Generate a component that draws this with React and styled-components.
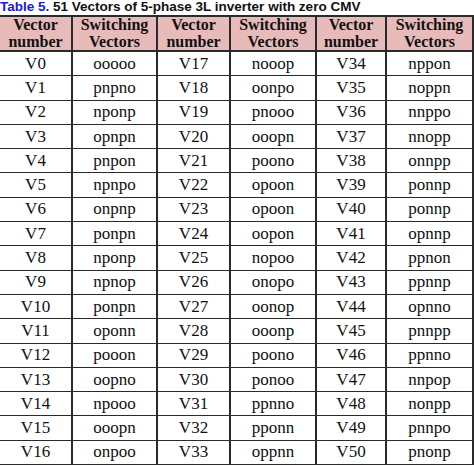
import styled, { createGlobalStyle } from 'styled-components';

const GlobalStyle = createGlobalStyle`
  html, body {
    margin: 0;
    padding: 0;
    background: #ffffff;
    overflow: hidden;
  }
`;

const rows = [
  ['V0', 'ooooo', 'V17', 'nooop', 'V34', 'nppon'],
  ['V1', 'pnpno', 'V18', 'oonpo', 'V35', 'noppn'],
  ['V2', 'nponp', 'V19', 'pnooo', 'V36', 'nnppo'],
  ['V3', 'opnpn', 'V20', 'ooopn', 'V37', 'nnopp'],
  ['V4', 'pnpon', 'V21', 'poono', 'V38', 'onnpp'],
  ['V5', 'npnpo', 'V22', 'opoon', 'V39', 'ponnp'],
  ['V6', 'onpnp', 'V23', 'opoon', 'V40', 'ponnp'],
  ['V7', 'ponpn', 'V24', 'oopon', 'V41', 'opnnp'],
  ['V8', 'nponp', 'V25', 'nopoo', 'V42', 'ppnon'],
  ['V9', 'npnop', 'V26', 'onopo', 'V43', 'ppnnp'],
  ['V10', 'ponpn', 'V27', 'oonop', 'V44', 'opnno'],
  ['V11', 'oponn', 'V28', 'ooonp', 'V45', 'pnnpp'],
  ['V12', 'pooon', 'V29', 'poono', 'V46', 'ppnno'],
  ['V13', 'oopno', 'V30', 'ponoo', 'V47', 'nnpop'],
  ['V14', 'npooo', 'V31', 'ppnno', 'V48', 'nonpp'],
  ['V15', 'ooopn', 'V32', 'pponn', 'V49', 'pnnpo'],
  ['V16', 'onpoo', 'V33', 'oppnn', 'V50', 'pnonp'],
];

const widths = [73, 85, 73, 86, 70, 87];

const Page = styled.div`
  width: 474px;
  height: 466px;
  overflow: hidden;
`;

const Caption = styled.div`
  margin: -1px 0 0 0;
  height: 16px;
  font-family: 'Liberation Sans', Arial, sans-serif;
  font-weight: 700;
  font-size: 13.5px;
  line-height: 16px;
  color: #111;
  white-space: nowrap;
`;

const Label = styled.span`
  color: #1a1ad0;
`;

const Table = styled.table`
  margin-left: -2px;
  border-collapse: collapse;
  table-layout: fixed;
  width: 476px;
  font-family: 'Liberation Serif', 'Times New Roman', serif;
  color: #111;
`;

const HeadCell = styled.th`
  background: #e8bbbb;
  border: 2px solid #2a2a2a;
  height: 29px;
  padding: 0;
  font-size: 16px;
  font-weight: 700;
  line-height: 16.5px;
  text-align: center;
`;

const Cell = styled.td`
  border: 2px solid #2a2a2a;
  border-width: 1.5px 2px;
  height: 23.3px;
  padding: 0;
  font-size: 17px;
  line-height: 20px;
  text-align: center;
`;

export default function App() {
  return (
    <Page>
      <GlobalStyle />
      <Caption>
        <Label>Table 5.</Label> 51 Vectors of 5-phase 3L inverter with zero CMV
      </Caption>
      <Table>
        <colgroup>
          {widths.map((w, i) => (
            <col key={i} style={{ width: w }} />
          ))}
        </colgroup>
        <thead>
          <tr>
            {[0, 1, 2].map((i) => (
              <>
                <HeadCell key={`n${i}`}>
                  Vector
                  <br />
                  number
                </HeadCell>
                <HeadCell key={`s${i}`}>
                  Switching
                  <br />
                  Vectors
                </HeadCell>
              </>
            ))}
          </tr>
        </thead>
        <tbody>
          {rows.map((r) => (
            <tr key={r[0]}>
              {r.map((c, i) => (
                <Cell key={i}>{c}</Cell>
              ))}
            </tr>
          ))}
        </tbody>
      </Table>
    </Page>
  );
}
